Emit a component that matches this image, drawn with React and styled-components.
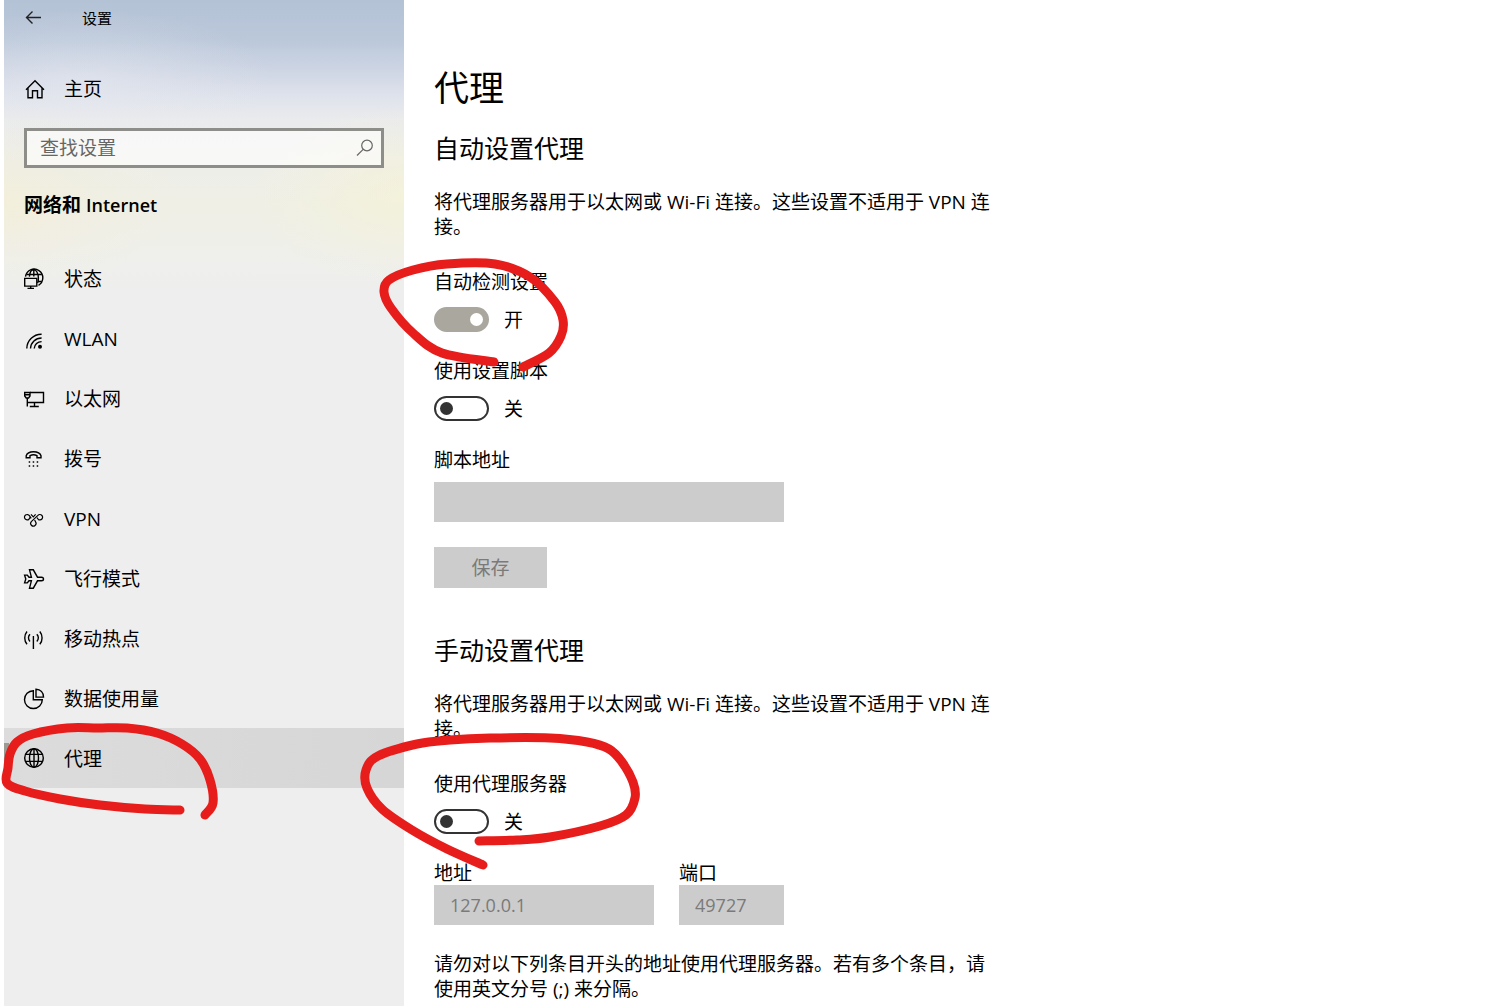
import React, { useState } from "react";
import styled, { createGlobalStyle, css } from "styled-components";

const GlobalStyle = createGlobalStyle`
  *, *::before, *::after { box-sizing: border-box; }
  body {
    margin: 0;
    background: #fff;
    color: #000;
    font-family: "Open Sans", "Noto Sans CJK SC", sans-serif;
    font-size: 19px;
    font-weight: 380;
    line-height: 24px;
  }
  h1, h2, p { margin: 0; font-weight: inherit; }
  input, button { font: inherit; }
`;

const Page = styled.div`
  position: relative;
  display: flex;
  min-height: 100vh;
  padding-left: 4px;
`;

const Sidebar = styled.aside`
  flex: 0 0 400px;
  background:
    radial-gradient(ellipse 170px 90px at 0 200px, rgba(246, 238, 206, 0.45), rgba(246, 238, 206, 0.15) 60%, transparent),
    radial-gradient(ellipse 150px 90px at 400px 195px, rgba(247, 244, 208, 0.55), rgba(247, 244, 208, 0.2) 60%, transparent),
    radial-gradient(ellipse 190px 70px at 80px 80px, rgba(232, 234, 240, 0.5), rgba(232, 234, 240, 0.2) 55%, transparent),
    linear-gradient(#b4c2d6 0, #bbc8da 40px, #ccd4e3 68px, #dee2eb 95px, #eaebed 120px,
      #eeeeea 160px, #efefe6 205px, #efefeb 250px, #eeeeee 290px);
`;

const TitleBar = styled.header`
  display: flex;
  align-items: center;
  gap: 38px;
  height: 36px;
  padding-left: 20px;
  font-size: 15px;
`;

const BackButton = styled.button`
  display: flex;
  padding: 0;
  border: 0;
  background: none;
  color: #222;
`;

const Glyph = styled.svg`
  display: block;
  flex: none;
  overflow: visible;
  fill: none;
  stroke: currentColor;
  stroke-width: ${(p) => (p.$thin ? 1.2 : 1.4)};
`;

const rowStyle = css`
  display: flex;
  align-items: center;
  gap: 20px;
  height: 60px;
  padding-left: 20px;
  color: #000;
  text-decoration: none;
`;

const HomeLink = styled.a`
  ${rowStyle}
  margin-top: 23px;
`;

const SearchBox = styled.div`
  display: flex;
  align-items: center;
  height: 40px;
  margin: 9px 20px 0;
  padding: 0 6px 0 13px;
  border: 3px solid #8d8e8a;
  background: rgba(255, 255, 255, 0.6);
  color: #666;
`;

const SearchInput = styled.input`
  flex: 1;
  min-width: 0;
  padding: 0;
  border: 0;
  outline: 0;
  background: none;
  &::placeholder { color: #666; opacity: 1; }
`;

const Category = styled.h2`
  display: flex;
  gap: 5px;
  margin: 25px 20px 31px;
  font-size: 18px;
  line-height: 24px;
  font-weight: 600;
`;

const CategoryName = styled.span`
  font-size: 19px;
  font-weight: 700;
`;

const NavLabel = styled.span`
  padding-top: 2px;
`;

const NavLink = styled.a`
  ${rowStyle}
  position: relative;
  ${(p) =>
    p.$active &&
    css`
      background: linear-gradient(90deg, #dcdcdc, #d6d6d6);
      &::before {
        content: "";
        position: absolute;
        left: 0;
        top: 15px;
        width: 5px;
        height: 30px;
        background: #9b9b93;
      }
    `}
`;

const Main = styled.main`
  flex: 1;
  min-width: 0;
  padding: 66px 30px 0;
`;

const Title = styled.h1`
  font-size: 35px;
  line-height: 44px;
`;

const Section = styled.section`
  display: flex;
  flex-direction: column;
  align-items: flex-start;
  gap: 27px;
  margin-top: ${(p) => p.$gap}px;
`;

const Intro = styled.div`
  display: flex;
  flex-direction: column;
  gap: 25px;
  padding-bottom: 3px;
`;

const SectionTitle = styled.h2`
  font-size: 25px;
  line-height: 34px;
`;

const Text = styled.p`
  max-width: 560px;
  line-height: 25px;
`;

const Field = styled.div`
  display: flex;
  flex-direction: column;
  gap: ${(p) => p.$gap || 0}px;
`;

const FieldRow = styled.div`
  display: flex;
  gap: 25px;
`;

const ToggleRow = styled.div`
  display: flex;
  align-items: center;
  gap: 15px;
  height: 25px;
`;

const Switch = styled.input`
  appearance: none;
  display: flex;
  align-items: center;
  width: 55px;
  height: 25px;
  margin: 0;
  padding: 0 4px;
  border: 2px solid #333;
  border-radius: 13px;
  background: #fff;
  &::before {
    content: "";
    width: 13px;
    height: 13px;
    border-radius: 50%;
    background: #333;
  }
  &:checked {
    justify-content: flex-end;
    border-color: #aaa79f;
    background: #aaa79f;
  }
  &:checked::before { background: #fff; }
`;

const TextBox = styled.input`
  width: ${(p) => p.$width}px;
  height: 40px;
  padding: 0 16px;
  border: 0;
  border-radius: 0;
  background: #ccc;
  color: #7a7a7a;
  && {
    font-size: 18px;
    font-weight: 400;
  }
`;

const SaveButton = styled.button`
  width: 113px;
  height: 41px;
  margin-top: -2px;
  padding: 0;
  border: 0;
  background: #ccc;
  color: #7a7a7a;
`;

const Marks = styled.svg`
  position: absolute;
  left: 0;
  top: 0;
  pointer-events: none;
  fill: none;
  stroke: #e71d1c;
  stroke-width: 9;
  stroke-linecap: round;
  stroke-linejoin: round;
`;

const iconShapes = {
  status: (
    <>
      <path d="M1.500 8.600A8.700 8.700 0 1 1 14.500 17.300" />
      <path d="M5.400 8.600C5.800 4.500 7.500 1.500 9.800 1.500s4.600 3.800 4.600 8.700c0 2-.3 3.600-.8 4.900M9.800 1.500v7.100M2.600 6.500h15.200M14 13.500h3.800" />
      <path d="M.7 10.400h12.100v7.700H.7zM6.700 18v2.300M3.500 20.400h6.500" />
    </>
  ),
  wlan: (
    <>
      <path d="M2.800 20.500A14.500 14.500 0 0 1 17.600 6.300M6.500 20.500A11 11 0 0 1 17.600 10M10.200 20.500A7.400 7.400 0 0 1 17.600 13.600" />
      <circle cx="16" cy="18.800" r="2" fill="currentColor" stroke="none" />
    </>
  ),
  ethernet: (
    <>
      <path d="M6 4.500h13.500v10H3.300M10.500 14.500v4M5.800 18.500h9M3.300 10v8.500" />
      <path d="M.7 4.500H6v3.500L4.600 10H2.200L.7 8zM.7 6.800H6" />
    </>
  ),
  dialup: (
    <>
      <path d="M2.200 9.700V7.800C3 5 6 3.700 9.500 3.700S16.200 5 17 7.800v1.900h-4V7.600c-2-1-5-1-7 0v2.100z" />
      <path d="M4.700 14h1.500M8.700 14h1.500M12.700 14h1.500M4.700 18h1.500M8.700 18h1.500M12.700 18h1.500" />
    </>
  ),
  vpn: (
    <>
      <path d="M5 11.200A2.700 2.700 0 1 1 5.400 7.700L7.200 10.300M5 11.200L6.200 9" />
      <path d="M14.100 11.200A2.700 2.700 0 1 0 13.900 7.400L7.300 13.600A2.700 2.700 0 1 0 11.600 13.900L10.600 12M14.100 11.200L13 9.600" />
      <path d="M7 6.400l2.300 2.400 2.300-2.400" />
    </>
  ),
  airplane: (
    <path d="M19.500 11c0-1.200-.8-1.800-2-1.800h-4L9.300 1.800H5.500l1.900 7.400H5L3.300 7.100H.6L1.800 11 .6 14.900h2.700L5 12.800h2.400l-1.900 7.400h3.800l4.200-7.400h4c1.200 0 2-.6 2-1.800z" />
  ),
  hotspot: (
    <path d="M9.400 8v13M6 6.200a5 5 0 0 0 0 7.200M12.800 6.200a5 5 0 0 1 0 7.200M3 3.500c-3 3.600-3 9.200 0 12.800M15.800 3.500c3 3.600 3 9.200 0 12.800" />
  ),
  usage: (
    <path d="M9.300 2.700a8.900 8.900 0 1 0 9 9H9.300zM12 1.200v7.900h7.500C19.500 4.500 16.500 1.400 12 1.200z" />
  ),
  proxy: (
    <>
      <circle cx="10" cy="10" r="9.300" />
      <ellipse cx="10" cy="10" rx="4.500" ry="9.300" />
      <path d="M10 .7v18.600M1.600 6.400h16.800M1.600 13.400h16.800" />
    </>
  ),
  home: <path d="M2 10.800L11 1.700l9 9.100M4 9v9.700h4.500v-7h5v7H18V9" />,
  back: <path d="M17 9.500H2.500M8.500 3.500l-6 6 6 6" />,
  search: (
    <>
      <circle cx="12" cy="7.500" r="5.300" />
      <path d="M8.200 11.300L2 17.500" />
    </>
  ),
};

function Icon({ name, thin }) {
  return (
    <Glyph width="20" height="20" viewBox="0 0 20 20" aria-hidden="true" $thin={thin}>
      {iconShapes[name]}
    </Glyph>
  );
}

const navItems = [
  ["status", "状态"],
  ["wlan", "WLAN"],
  ["ethernet", "以太网"],
  ["dialup", "拨号"],
  ["vpn", "VPN"],
  ["airplane", "飞行模式"],
  ["hotspot", "移动热点"],
  ["usage", "数据使用量"],
  ["proxy", "代理"],
];

// Pen strokes, each a list of points the curve passes through.
const strokes = [
  [[180, 810], [145, 809], [100, 805], [60, 799], [25, 791], [7, 783], [8, 768], [10, 754], [17, 742], [33, 734], [67, 728], [98, 728], [127, 728], [157, 733], [182, 744], [200, 759], [210, 780], [213, 803], [205, 815]],
  [[494, 362], [442, 353], [413, 333], [391, 308], [384, 292], [389, 280], [413, 270], [447, 264], [495, 264], [530, 277], [555, 302], [563, 320], [561, 336], [549, 353], [523, 367]],
  [[483, 865], [447, 849], [412, 830], [382, 809], [367, 788], [366, 770], [378, 756], [417, 744], [450, 740], [490, 738], [550, 738], [587, 742], [609, 749], [622, 762], [633, 782], [635, 798], [626, 815], [600, 826], [550, 837], [517, 840], [479, 841]],
];

function smooth(points) {
  let d = `M${points[0].join(" ")}`;
  for (let i = 0; i < points.length - 1; i += 1) {
    const a = points[i - 1] || points[i];
    const b = points[i];
    const c = points[i + 1];
    const e = points[i + 2] || c;
    d += `C${b[0] + (c[0] - a[0]) / 6} ${b[1] + (c[1] - a[1]) / 6} ${c[0] - (e[0] - b[0]) / 6} ${c[1] - (e[1] - b[1]) / 6} ${c[0]} ${c[1]}`;
  }
  return d;
}

function Toggle({ id, label, initial }) {
  const [on, setOn] = useState(Boolean(initial));
  return (
    <Field $gap={13}>
      <label htmlFor={id}>{label}</label>
      <ToggleRow>
        <Switch id={id} type="checkbox" role="switch" checked={on} onChange={() => setOn(!on)} />
        <span>{on ? "开" : "关"}</span>
      </ToggleRow>
    </Field>
  );
}

function SectionIntro({ title }) {
  return (
    <Intro>
      <SectionTitle>{title}</SectionTitle>
      <Text>将代理服务器用于以太网或 Wi-Fi 连接。这些设置不适用于 VPN 连接。</Text>
    </Intro>
  );
}

export default function App() {
  return (
    <Page>
      <GlobalStyle />
      <Sidebar>
        <TitleBar>
          <BackButton type="button" aria-label="返回">
            <Icon name="back" />
          </BackButton>
          <span>设置</span>
        </TitleBar>
        <HomeLink href="#home">
          <Icon name="home" />
          <span>主页</span>
        </HomeLink>
        <SearchBox>
          <SearchInput type="text" placeholder="查找设置" aria-label="查找设置" />
          <Icon name="search" thin />
        </SearchBox>
        <Category>
          <CategoryName>网络和</CategoryName>
          <span>Internet</span>
        </Category>
        <nav>
          {navItems.map(([icon, text]) => (
            <NavLink key={icon} href={`#${icon}`} $active={icon === "proxy"}>
              <Icon name={icon} thin={icon === "vpn"} />
              <NavLabel>{text}</NavLabel>
            </NavLink>
          ))}
        </nav>
      </Sidebar>
      <Main>
        <Title>代理</Title>
        <Section $gap={21}>
          <SectionIntro title="自动设置代理" />
          <Toggle id="detect" label="自动检测设置" initial />
          <Toggle id="script" label="使用设置脚本" />
          <Field $gap={10}>
            <label htmlFor="script-address">脚本地址</label>
            <TextBox id="script-address" type="text" $width={350} disabled />
          </Field>
          <SaveButton type="button" disabled>保存</SaveButton>
        </Section>
        <Section $gap={45}>
          <SectionIntro title="手动设置代理" />
          <Toggle id="proxy-server" label="使用代理服务器" />
          <FieldRow>
            <Field>
              <label htmlFor="address">地址</label>
              <TextBox id="address" type="text" $width={220} defaultValue="127.0.0.1" disabled />
            </Field>
            <Field>
              <label htmlFor="port">端口</label>
              <TextBox id="port" type="text" $width={105} defaultValue="49727" disabled />
            </Field>
          </FieldRow>
          <Text>请勿对以下列条目开头的地址使用代理服务器。若有多个条目，请使用英文分号 (;) 来分隔。</Text>
        </Section>
      </Main>
      <Marks width="660" height="880" viewBox="0 0 660 880" aria-hidden="true">
        {strokes.map((points, i) => (
          <path key={i} d={smooth(points)} />
        ))}
      </Marks>
    </Page>
  );
}
